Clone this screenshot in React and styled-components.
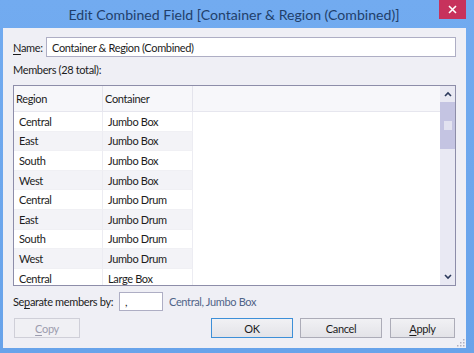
import React from "react";
import styled, { createGlobalStyle } from "styled-components";

const GlobalStyle = createGlobalStyle`
  html, body {
    margin: 0;
    padding: 0;
    background-color: #6ea8ee;
  }
  body {
    font-family: Lato, "Noto Sans", sans-serif;
  }
`;

const Frame = styled("div")`
  width: 474px;
  height: 353px;
  background: linear-gradient(#72abf0, #68a3ea);
  display: flex;
  flex-direction: column;
  overflow: hidden;
`;

const TitleBar = styled("div")`
  height: 28px;
  display: grid;
  grid-template-columns: 1fr auto 1fr;
`;

const Title = styled("div")`
  grid-column: 2;
  font-size: 14.1px;
  line-height: 30px;
  color: #213f6b;
  white-space: nowrap;
  margin-left: -6px;
`;

const CloseButton = styled("div")`
  grid-column: 3;
  justify-self: end;
  width: 27px;
  height: 19px;
  margin-right: 8px;
  background-color: #c7325c;
  display: flex;
  align-items: center;
  justify-content: center;
`;

const Body = styled("div")`
  flex: 1;
  margin: 0 8px 5px 3px;
  background-color: #efeff5;
  padding: 9px 10px 0 10px;
  display: flex;
  flex-direction: column;
  font-size: 11px;
  letter-spacing: -0.35px;
  color: #1c1c1c;
`;

const FieldRow = styled("div")`
  display: flex;
  align-items: center;
  gap: ${(p) => p.gap || 0}px;
  margin-top: ${(p) => p.top || 0}px;
`;

const Label = styled("span")`
  white-space: nowrap;
  width: ${(p) => (p.w ? `${p.w}px` : "auto")};
  flex: none;
`;

const Key = styled("span")`
  text-decoration: underline;
  text-underline-offset: 2px;
`;

const TextBox = styled("div")`
  height: ${(p) => p.h || 20}px;
  width: ${(p) => (p.w ? `${p.w}px` : "auto")};
  flex: ${(p) => (p.w ? "none" : 1)};
  box-sizing: border-box;
  background-color: #ffffff;
  border: 1px solid #aeaec4;
  padding: 0 5px;
  display: flex;
  align-items: center;
  white-space: nowrap;
`;

const SectionLabel = styled("div")`
  margin-top: 5px;
  height: 16px;
  line-height: 16px;
`;

const ListBox = styled("div")`
  margin-top: 7px;
  height: 201px;
  box-sizing: border-box;
  border: 1px solid #8d8da9;
  background-color: #ffffff;
  display: flex;
  overflow: hidden;
`;

const Table = styled("div")`
  flex: 1;
  display: flex;
  flex-direction: column;
`;

const HeaderRow = styled("div")`
  height: 25px;
  flex: none;
  background-color: #f7f7fa;
  border-bottom: 1px solid #e6e6ee;
  display: flex;
`;

const HeaderCell = styled("div")`
  width: ${(p) => p.w}px;
  box-sizing: border-box;
  border-right: 1px solid #e4e4ec;
  padding-left: 2px;
  display: flex;
  align-items: center;
`;

const Row = styled("div")`
  height: 19.6px;
  flex: none;
  display: flex;
`;

const Cell = styled("div")`
  width: ${(p) => p.w}px;
  box-sizing: border-box;
  background-color: ${(p) => (p.alt ? "#f3f3f7" : "#ffffff")};
  border-right: 1px solid #ececf2;
  border-bottom: 1px solid #f0f0f4;
  padding-left: 5px;
  display: flex;
  align-items: center;
`;

const ScrollBar = styled("div")`
  width: 15px;
  flex: none;
  background-color: #e9e9f3;
  display: flex;
  flex-direction: column;
`;

const ScrollArrow = styled("div")`
  height: 16px;
  flex: none;
  display: flex;
  align-items: center;
  justify-content: center;
`;

const Thumb = styled("div")`
  height: 47px;
  flex: none;
  background-color: #c4c4e2;
  display: flex;
  align-items: center;
  justify-content: center;
`;

const Grip = styled("div")`
  width: 8px;
  height: 9px;
  background-color: #e2e2f0;
`;

const Track = styled("div")`
  flex: 1;
`;

const Preview = styled("span")`
  color: #4f6488;
  white-space: nowrap;
  margin-left: 6px;
`;

const ButtonRow = styled("div")`
  display: flex;
  margin-top: 7px;
  align-items: center;
`;

const Button = styled("div")`
  width: ${(p) => p.w}px;
  height: 20px;
  margin-left: ${(p) => p.ml || 0}px;
  box-sizing: border-box;
  border: 1px solid ${(p) => (p.primary ? "#3d8fd8" : p.disabled ? "#cfcfd8" : "#acacb8")};
  background: ${(p) =>
    p.disabled ? "#f0f0f4" : "linear-gradient(#f1f1f4, #e3e3e8)"};
  color: ${(p) => (p.disabled ? "#9c9cae" : "#1c1c1c")};
  display: flex;
  align-items: center;
  justify-content: center;
`;

const Grabber = styled("svg")`
  align-self: flex-end;
  margin: 0 -9px 0 auto;
  position: relative;
  top: 1px;
`;

const rows = [
  ["Central", "Jumbo Box"],
  ["East", "Jumbo Box"],
  ["South", "Jumbo Box"],
  ["West", "Jumbo Box"],
  ["Central", "Jumbo Drum"],
  ["East", "Jumbo Drum"],
  ["South", "Jumbo Drum"],
  ["West", "Jumbo Drum"],
  ["Central", "Large Box"],
];

const App = () => (
  <>
    <GlobalStyle />
    <Frame>
      <TitleBar>
        <Title>Edit Combined Field [Container &amp; Region (Combined)]</Title>
        <CloseButton>
          <svg width="9" height="9" viewBox="0 0 9 9">
            <path d="M1 1 L8 8 M8 1 L1 8" stroke="#ffffff" strokeWidth="1.6" />
          </svg>
        </CloseButton>
      </TitleBar>
      <Body>
        <FieldRow>
          <Label w={33}>
            <Key>N</Key>ame:
          </Label>
          <TextBox>Container &amp; Region (Combined)</TextBox>
        </FieldRow>
        <SectionLabel>Members (28 total):</SectionLabel>
        <ListBox>
          <Table>
            <HeaderRow>
              <HeaderCell w={89}>Region</HeaderCell>
              <HeaderCell w={90}>Container</HeaderCell>
            </HeaderRow>
            {rows.map(([region, container], i) => (
              <Row key={i}>
                <Cell w={89} alt={i % 2 === 1}>
                  {region}
                </Cell>
                <Cell w={90} alt={i % 2 === 1}>
                  {container}
                </Cell>
              </Row>
            ))}
          </Table>
          <ScrollBar>
            <ScrollArrow>
              <svg width="8" height="6" viewBox="0 0 8 6">
                <path d="M1 5 L4 2 L7 5" fill="none" stroke="#2c3a5c" strokeWidth="1.6" />
              </svg>
            </ScrollArrow>
            <Thumb>
              <Grip />
            </Thumb>
            <Track />
            <ScrollArrow>
              <svg width="8" height="6" viewBox="0 0 8 6">
                <path d="M1 1 L4 4 L7 1" fill="none" stroke="#2c3a5c" strokeWidth="1.6" />
              </svg>
            </ScrollArrow>
          </ScrollBar>
        </ListBox>
        <FieldRow top={6}>
          <Label w={106}>
            Se<Key>p</Key>arate members by:
          </Label>
          <TextBox w={44} h={19}>
            ,
          </TextBox>
          <Preview>Central, Jumbo Box</Preview>
        </FieldRow>
        <ButtonRow>
          <Button w={66} ml={1} disabled>
            <span>
              <Key>C</Key>opy
            </span>
          </Button>
          <Button w={82} ml={131} primary>
            OK
          </Button>
          <Button w={82} ml={7}>
            Cancel
          </Button>
          <Button w={65} ml={8}>
            <span>
              <Key>A</Key>pply
            </span>
          </Button>
        </ButtonRow>
        <Grabber width="8" height="8" viewBox="0 0 8 8">
          <rect x="6" y="0" width="1.5" height="1.5" fill="#b0b0c0" />
          <rect x="3" y="3" width="1.5" height="1.5" fill="#b0b0c0" />
          <rect x="6" y="3" width="1.5" height="1.5" fill="#b0b0c0" />
          <rect x="0" y="6" width="1.5" height="1.5" fill="#b0b0c0" />
          <rect x="3" y="6" width="1.5" height="1.5" fill="#b0b0c0" />
          <rect x="6" y="6" width="1.5" height="1.5" fill="#b0b0c0" />
        </Grabber>
      </Body>
    </Frame>
  </>
);

export default App;
